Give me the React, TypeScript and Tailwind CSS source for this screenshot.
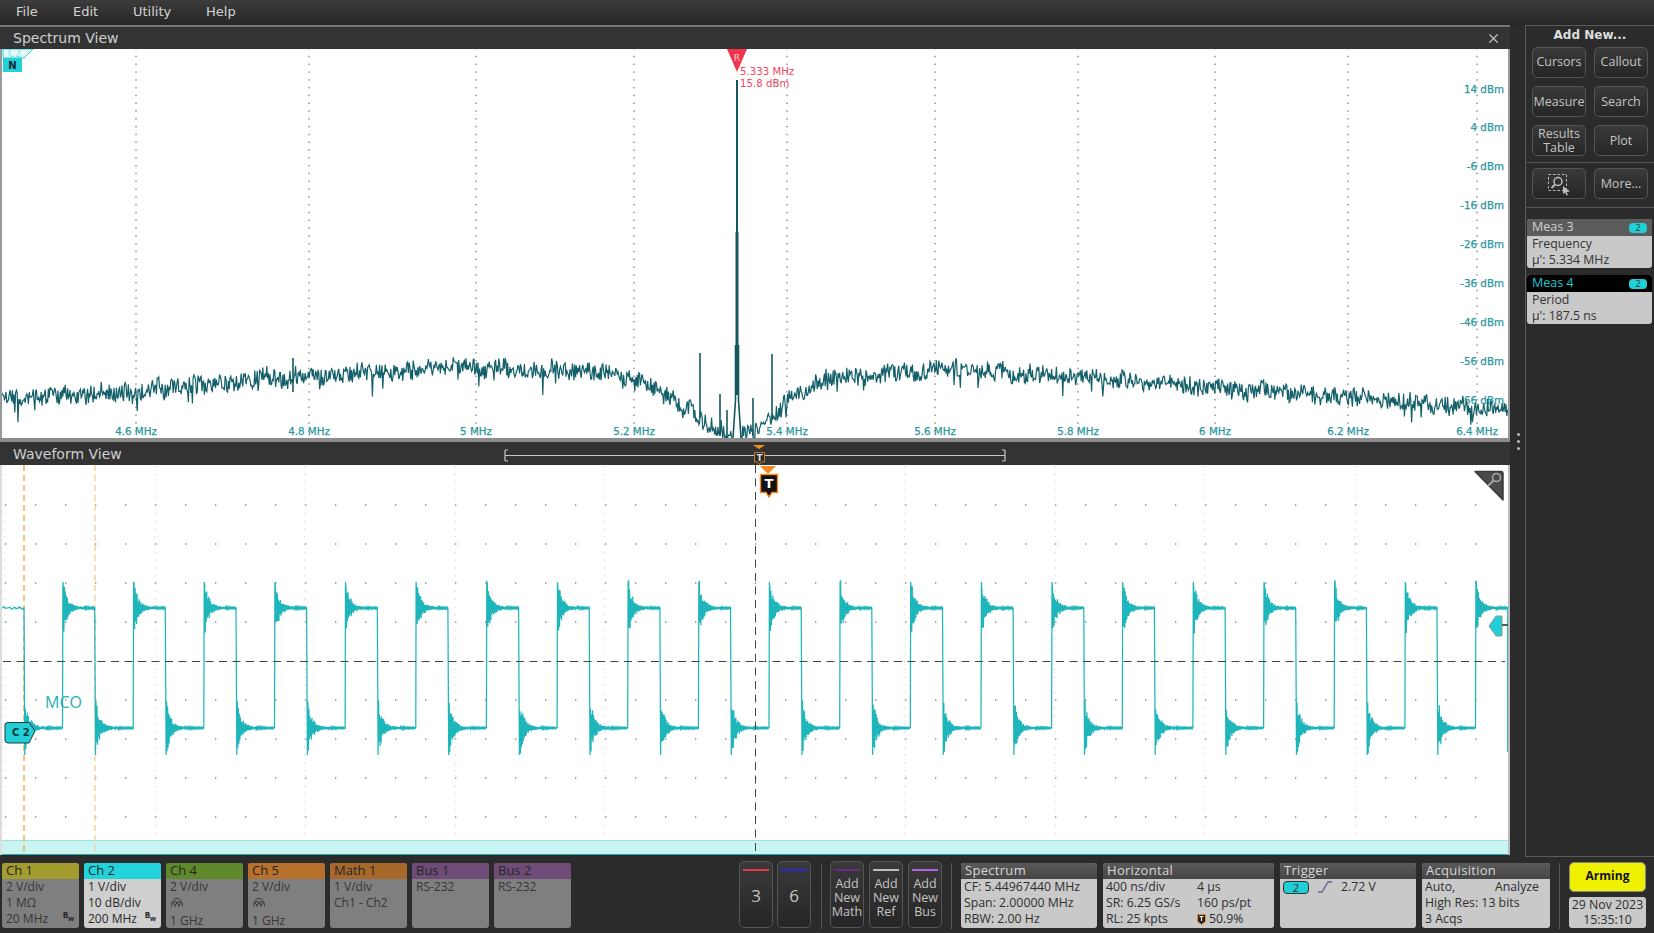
import React from 'react';
import { X } from 'lucide-react';

// seeded noise so the traces come out the same on every load
let seed = 1234567;
const rnd = () => {
  seed = (seed + 0x6d2b79f5) | 0;
  let t = Math.imul(seed ^ (seed >>> 15), 1 | seed);
  t = (t + Math.imul(t ^ (t >>> 7), 61 | t)) ^ t;
  return ((t ^ (t >>> 14)) >>> 0) / 4294967296;
};

const LEVELS: [number, number][] = [
  [0, 398], [150, 390], [290, 376], [450, 368], [600, 372], [650, 386], [690, 410], [715, 428],
  [733, 436], [741, 436], [760, 428], [790, 398], [830, 378], [950, 368], [1100, 378], [1250, 390],
  [1400, 402], [1510, 410],
];

const levelAt = (x: number) => {
  for (let i = 1; i < LEVELS.length; i++) {
    if (x <= LEVELS[i][0]) {
      const [x0, y0] = LEVELS[i - 1];
      const [x1, y1] = LEVELS[i];
      return y0 + ((y1 - y0) * (x - x0)) / (x1 - x0);
    }
  }
  return 410;
};

const buildSpectrum = () => {
  let d = '';
  let pen = false;
  let drift = 0;
  for (let x = 2; x < 1508; x += 0.8) {
    if (x > 733 && x < 741) {
      pen = false;
      continue;
    }
    drift = drift * 0.75 + (rnd() - 0.5) * 4;
    let y = levelAt(x) + drift + (rnd() - 0.5) * 17;
    if (rnd() > 0.97) y += 8 + 8 * rnd();
    if (x < 30 && rnd() > 0.9) y += 20;
    d += `${pen ? 'L' : 'M'}${x.toFixed(1)} ${Math.min(y, 438).toFixed(1)}`;
    pen = true;
  }
  return d;
};

const RISES = Array.from({ length: 21 }, (_, i) => 62.5 + i * 70.65);
const FALLS = Array.from({ length: 22 }, (_, i) => 24 + i * 70.65);

const buildWaveform = () => {
  let d = 'M2 608';
  for (let x = 3; x < 24; x += 1) d += `L${x} ${(608 + (rnd() - 0.5) * 2.5).toFixed(1)}`;
  const ring = (from: number, to: number, mid: number, tip: number) => {
    d += `L${from.toFixed(1)} ${tip}`;
    let flip = 1;
    for (let x = from + 0.5; x < to; x += 0.5) {
      const dt = x - from;
      const a = 24 * Math.exp(-dt / 3.5) + 8 * Math.exp(-dt / 8) + 0.6;
      flip = -flip;
      d += `L${x.toFixed(1)} ${(mid + flip * a * (0.5 + rnd() * 0.5)).toFixed(1)}`;
    }
    d += `L${to.toFixed(1)} ${mid}`;
  };
  RISES.forEach((r, i) => {
    const f = FALLS[i];
    d += `L${f.toFixed(1)} 608`;
    ring(f + 0.8, r, 728, 755);
    ring(r + 0.4, FALLS[i + 1], 608, 582);
  });
  d += `L${FALLS[21].toFixed(1)} 752`;
  return d;
};

const SPECTRUM_D = buildSpectrum();
const WAVE_D = buildWaveform();

const DBM = [
  ['14 dBm', 93], ['4 dBm', 131], ['-6 dBm', 170], ['-16 dBm', 209], ['-26 dBm', 248],
  ['-36 dBm', 287], ['-46 dBm', 326], ['-56 dBm', 365], ['-66 dBm', 404],
] as const;

const FREQ = [
  ['4.6 MHz', 136], ['4.8 MHz', 309], ['5 MHz', 476], ['5.2 MHz', 634], ['5.4 MHz', 787],
  ['5.6 MHz', 935], ['5.8 MHz', 1078], ['6 MHz', 1215], ['6.2 MHz', 1348], ['6.4 MHz', 1477],
] as const;

const SpectrumPlot = () => (
  <svg viewBox="2 49 1506 389" className="block w-[1506px] h-[389px] bg-white">
    {FREQ.map(([, x]) => (
      <line key={x} x1={x} x2={x} y1={48} y2={438} stroke="#555" strokeWidth={1} strokeDasharray="1.4 6.4" />
    ))}
    {DBM.map(([label, y]) => (
      <text key={label} x={1504} y={y} textAnchor="end" className="fill-[#2a979d] stroke-[#2a979d] stroke-[0.25] text-[10.3px] font-['DejaVu_Sans']">
        {label}
      </text>
    ))}
    {FREQ.map(([label, x]) => (
      <text key={label} x={x} y={435} textAnchor="middle" className="fill-[#2a979d] stroke-[#2a979d] stroke-[0.25] text-[10.3px] font-['DejaVu_Sans']">
        {label}
      </text>
    ))}
    <path d={SPECTRUM_D} fill="none" stroke="#14606a" strokeWidth={1.2} />
    {/* carrier and side spurs */}
    <g stroke="#15575f" fill="none">
      <path d="M737 80V395" strokeWidth={2} />
      <path d="M737 232V348" strokeWidth={3} />
      <path d="M735.5 345V400L733 438M738.5 345V400L741 438" strokeWidth={1.6} />
      <path d="M700 353V418M772 354V420M293 358V392M720 394V436M753 398V436M727 410V438" strokeWidth={1.6} />
    </g>
    <polygon points="3,49 33,49 24,58 3,58" fill="#e4fafa" stroke="#24d0d8" strokeWidth={1} />
    <text x={8} y={57} className="fill-[#7fdfe3] text-[10px] font-['DejaVu_Sans']">C2</text>
    <rect x={3} y={58} width={19} height={14} fill="#22d0d8" />
    <text x={12.5} y={69} textAnchor="middle" className="fill-[#123] text-[10px] font-bold font-['DejaVu_Sans']">N</text>
    <polygon points="727,49 747,49 737,72" fill="#f0354f" />
    <text x={737} y={61} textAnchor="middle" className="fill-[#ffd5da] text-[9px] font-['DejaVu_Sans']">R</text>
    <text x={740} y={75} className="fill-[#f0455c] text-[10.2px] font-['DejaVu_Sans']">5.333 MHz</text>
    <text x={740} y={87} className="fill-[#f0455c] text-[10.2px] font-['DejaVu_Sans']">15.8 dBm</text>
  </svg>
);

const WAVE_ROWS = [505, 544, 583, 622, 700, 739, 778, 817];
const WAVE_COLS = [5, 155, 305, 455, 605, 905, 1055, 1205, 1355];

const WaveformPlot = () => (
  <svg viewBox="2 465 1506 390" className="block w-[1506px] h-[390px] bg-white">
    {WAVE_ROWS.map((y) => (
      <line key={y} x1={5} x2={1505} y1={y} y2={y} stroke="#555" strokeWidth={1.2} strokeDasharray="1.4 28.6" />
    ))}
    {WAVE_COLS.map((x) => (
      <line key={x} x1={x} x2={x} y1={466} y2={840} stroke="#ccc" strokeWidth={1} strokeDasharray="1.3 6.5" />
    ))}
    <rect x={2} y={840} width={1506} height={14} fill="#c8f4f2" />
    <line x1={2} x2={1508} y1={840.5} y2={840.5} stroke="#9fe0e0" />
    <line x1={2} x2={1508} y1={854.5} y2={854.5} stroke="#2aa3aa" />
    <line x1={24} x2={24} y1={465} y2={854} stroke="#f59a2e" strokeWidth={1.2} strokeDasharray="6 4" />
    <line x1={95} x2={95} y1={465} y2={854} stroke="#f8c58c" strokeWidth={1.2} strokeDasharray="6 4" />
    <path d={WAVE_D} fill="none" stroke="#1fb6bb" strokeWidth={1.25} />
    <line x1={3} x2={1505} y1={661.5} y2={661.5} stroke="#444" strokeWidth={1} strokeDasharray="8 5.5" />
    <line x1={755.5} x2={755.5} y1={465} y2={854} stroke="#444" strokeWidth={1} strokeDasharray="8 5.5" />
    {/* trigger position marker */}
    <polygon points="760,466 776,466 768,474" fill="#f58a24" />
    <path d="M760.5 474.5H777.5V492.5H772L769 497L766 492.5H760.5Z" fill="#111" stroke="#f58a24" strokeWidth={1.4} />
    <text x={769} y={488} textAnchor="middle" className="fill-white text-[13px] font-bold font-['DejaVu_Sans']">T</text>
    {/* zoom corner */}
    <path d="M1475 471.5H1501Q1503 471.5 1503 474V500Z" fill="#4a4a4a" stroke="#3a3a3a" strokeWidth={1.5} strokeLinejoin="round" />
    <circle cx={1496.5} cy={477.5} r={4} fill="none" stroke="#a5a5a5" strokeWidth={1.6} />
    <line x1={1493.5} y1={480.5} x2={1488} y2={486} stroke="#a5a5a5" strokeWidth={2} />
    {/* ch2 markers */}
    <polygon points="1489,626 1496,616 1502,616 1502,636 1496,636" fill="#22cfd6" stroke="#8a9a9a" strokeWidth={1} />
    <line x1={1502} x2={1508} y1={625} y2={625} stroke="#333" strokeWidth={1.6} />
    <path d="M8 722.5H29L35 731L29 743H8Q5 743 5 740V725Q5 722.5 8 722.5Z" fill="#22cfd6" stroke="#1c3a40" strokeWidth={1} />
    <text x={12} y={736} className="fill-[#12343a] text-[10px] font-bold font-['DejaVu_Sans']">C 2</text>
    <text x={45} y={708} className="fill-[#1fb0b5] text-[16px] font-['Open_Sans']">MCO</text>
  </svg>
);

const WaveHeaderOverlay = () => (
  <svg viewBox="0 0 1510 23" className="absolute inset-0 w-[1510px] h-[23px]">
    <path d="M505 8V19M505 13.5H1005M1005 8V19M505 8H508M505 19H508M1005 8H1002M1005 19H1002" fill="none" stroke="#c8c8c8" strokeWidth={1.2} />
    <polygon points="753,3 765,3 759,7" fill="#f58a24" />
    <path d="M754.5 10.5H764.5V20H761L759.5 22.5L758 20H754.5Z" fill="#2a2a2a" stroke="#c47a2e" strokeWidth={1} />
    <text x={759.5} y={19} textAnchor="middle" className="fill-[#ddd] text-[9px] font-bold font-['DejaVu_Sans']">T</text>
  </svg>
);

const Bw = () => (
  <span className="absolute right-[5px] bottom-[6px] text-[8px] leading-none font-bold text-[#222]">
    B<span className="text-[7px] align-sub">w</span>
  </span>
);

const Probe = () => (
  <svg viewBox="0 0 14 11" className="w-[14px] h-[11px] mt-[2px]" fill="none" stroke="#3a3a3a" strokeWidth={1}>
    <path d="M1.5 9.5C1.5 4 4 1.5 7 1.5S12.5 4 12.5 9.5" />
    <circle cx={5} cy={6} r={1.6} />
    <circle cx={9} cy={6} r={1.6} />
    <path d="M5 7.6V10M9 7.6V10" />
  </svg>
);

type ChannelProps = {
  title: string;
  head: string;
  lines: React.ReactNode[];
  selected?: boolean;
  bw?: boolean;
};

const Channel = ({ title, head, lines, selected, bw }: ChannelProps) => (
  <div className={`relative w-[77px] h-[65px] rounded-[3px] ${selected ? 'bg-[#cfcfcf]' : 'bg-[#7f7f7f]'}`}>
    <div className={`h-[16px] px-[4px] rounded-t-[3px] text-[13px] leading-[15px] text-[#262626] ${head}`}>{title}</div>
    <div className={`px-[4px] text-[12px] leading-[16px] ${selected ? 'text-[#2a2a2a]' : 'text-[#363636]'}`}>
      {lines.map((l, i) => (
        <div key={i} className="h-[16px]">{l}</div>
      ))}
    </div>
    {bw && <Bw />}
  </div>
);

const Readout = ({ title, width, children }: { title: string; width: string; children: React.ReactNode }) => (
  <div className={`${width} h-[65px] rounded-[3px] bg-[#c9c9c9]`}>
    <div className="h-[16px] px-[4px] rounded-t-[3px] bg-linear-to-b from-[#5a5a5a] to-[#454545] text-[13px] leading-[15px] tracking-[0.3px] text-[#d8d8d8]">
      {title}
    </div>
    <div className="px-[3px] text-[12.3px] leading-[16px] text-[#2e2e2e]">{children}</div>
  </div>
);

const softKey = 'border border-[#555] rounded-[5px] bg-linear-to-b from-[#3a3a3a] to-[#262626] text-[#c4c4c4] text-center';

const RefKey = ({ n, strip }: { n: string; strip: string }) => (
  <div className={`${softKey} w-[34px] h-[67px] -mt-[2px] px-[3px] pt-[7px]`}>
    <div className={`h-[2px] ${strip}`} />
    <div className="mt-[15px] text-[17px] leading-[20px]">{n}</div>
  </div>
);

const AddKey = ({ label, strip }: { label: string; strip: string }) => (
  <div className={`${softKey} w-[34px] h-[67px] -mt-[2px] px-[3px] pt-[7px]`}>
    <div className={`h-[2px] ${strip}`} />
    <div className="mt-[6px] -mx-[3px] text-[12.5px] leading-[14px]">
      Add<br />New<br />{label}
    </div>
  </div>
);

const PanelKey = ({ children, lift }: { children: React.ReactNode; lift?: boolean }) => (
  <div className={`${softKey} h-[31px] ${lift ? 'pb-[2px]' : ''} flex items-center justify-center text-[12.5px] leading-[14px]`}>{children}</div>
);

const Badge2 = () => (
  <span className="w-[18px] h-[10px] rounded-[4px] bg-[#22cfd6] text-[9px] leading-[10px] text-center text-[#1c3a40]">2</span>
);

const Meas = ({ name, line1, line2, active }: { name: string; line1: string; line2: string; active?: boolean }) => (
  <div className="h-[49px] rounded-[3px] overflow-hidden bg-[#c9c9c9]">
    <div className={`h-[17px] pl-[5px] pr-[5px] flex items-center justify-between text-[12.5px] ${active ? 'bg-black text-[#1fc8d0]' : 'bg-[#5c5c5c] text-[#d0d0d0]'}`}>
      {name}
      <Badge2 />
    </div>
    <div className="px-[5px] text-[12.3px] leading-[16px] text-[#333]">
      <div>{line1}</div>
      <div>{line2}</div>
    </div>
  </div>
);

const VSep = () => <div className="w-px h-[66px] bg-[#555]" />;

const App: React.FC = () => {
  return (
    <div className="w-[1654px] h-[933px] flex flex-col overflow-hidden bg-[#2b2b2b] font-['Open_Sans',sans-serif]">
      {/* Menu bar */}
      <div className="h-[25px] flex items-center pl-[16px] pb-px bg-linear-to-b from-[#3c3c3c] to-[#262626] text-[13px] text-[#d4d4d4] font-['DejaVu_Sans',sans-serif]">
        <span className="w-[57px]">File</span>
        <span className="w-[60px]">Edit</span>
        <span className="w-[73px]">Utility</span>
        <span>Help</span>
      </div>

      <div className="h-[832px] flex">
        {/* Views */}
        <div className="w-[1510px] border-t-2 border-[#777]">
          <div className="h-[22px] pl-[13px] pr-[9px] flex items-center justify-between bg-[#333] text-[14px] text-[#cfcfcf] font-['DejaVu_Sans',sans-serif]">
            Spectrum View
            <X size={15} className="text-[#bdbdbd]" />
          </div>
          <div className="border-x-2 border-[#999]">
            <SpectrumPlot />
          </div>
          <div className="h-[4px] bg-[#8c8c8c]" />
          <div className="relative h-[23px] pl-[13px] pt-[2px] flex items-center bg-[#333] text-[14px] text-[#cfcfcf] font-['DejaVu_Sans',sans-serif]">
            Waveform View
            <WaveHeaderOverlay />
          </div>
          <div className="border-l-2 border-[#ddd] border-r-2 border-r-[#bbb]">
            <WaveformPlot />
          </div>
        </div>

        {/* Gutter handle */}
        <div className="w-[15px] flex flex-col items-center justify-center gap-[4px] pl-[1px]">
          <span className="w-[3px] h-[3px] rounded-full bg-[#bbb]" />
          <span className="w-[3px] h-[3px] rounded-full bg-[#bbb]" />
          <span className="w-[3px] h-[3px] rounded-full bg-[#bbb]" />
        </div>

        {/* Results panel */}
        <div className="w-[129px] border-l border-t border-b border-[#5c5c5c]">
          <div className="h-[21px] pb-[4px] flex items-center justify-center text-[12px] font-bold text-[#dedede] font-['DejaVu_Sans',sans-serif]">
            Add New...
          </div>
          <div className="ml-[6px] grid grid-cols-[54px_54px] gap-x-2 gap-y-2">
            <PanelKey lift>Cursors</PanelKey>
            <PanelKey lift>Callout</PanelKey>
            <PanelKey>Measure</PanelKey>
            <PanelKey>Search</PanelKey>
            <PanelKey>Results<br />Table</PanelKey>
            <PanelKey>Plot</PanelKey>
          </div>
          <div className="mt-[6px] h-px bg-[#555]" />
          <div className="mt-[5px] ml-[6px] grid grid-cols-[54px_54px] gap-x-2">
            <PanelKey>
              <svg viewBox="0 0 26 24" className="w-[26px] h-[24px]" fill="none" stroke="#bdbdbd">
                <rect x={2.5} y={2.5} width={18} height={16} strokeDasharray="2.5 2" />
                <circle cx={12} cy={9.5} r={4} strokeWidth={1.5} />
                <path d="M9 12.5L5.5 16" strokeWidth={2} />
                <path d="M17 14L24 19.5L20.5 20L22 23L20.5 23.5L19 20.5L17 22Z" fill="#bdbdbd" stroke="none" />
              </svg>
            </PanelKey>
            <PanelKey>More...</PanelKey>
          </div>
          <div className="mt-[8px] h-px bg-[#555]" />
          <div className="mt-[11px] ml-[1px] mr-[2px] flex flex-col gap-[7px]">
            <Meas name="Meas 3" line1="Frequency" line2="µ': 5.334 MHz" />
            <Meas name="Meas 4" line1="Period" line2="µ': 187.5 ns" active />
          </div>
        </div>
      </div>

      {/* Bottom bar */}
      <div className="h-[76px] flex items-start pl-[2px] pt-[6px]">
        <div className="flex gap-[5px]">
          <Channel title="Ch 1" head="bg-[#a39c2e]" lines={['2 V/div', '1 MΩ', '20 MHz']} bw />
          <Channel title="Ch 2" head="bg-[#22d3db]" lines={['1 V/div', '10 dB/div', '200 MHz']} selected bw />
          <Channel title="Ch 4" head="bg-[#5f8a2c]" lines={['2 V/div', <Probe />, '1 GHz']} />
          <Channel title="Ch 5" head="bg-[#b8702d]" lines={['2 V/div', <Probe />, '1 GHz']} />
          <Channel title="Math 1" head="bg-[#a8682a]" lines={['1 V/div', 'Ch1 - Ch2']} />
          <Channel title="Bus 1" head="bg-[#6e4c77]" lines={['RS-232']} />
          <Channel title="Bus 2" head="bg-[#6e4c77]" lines={['RS-232']} />
        </div>

        <div className="ml-[168px] flex gap-[4px]">
          <RefKey n="3" strip="bg-[#e8364f]" />
          <RefKey n="6" strip="bg-[#2a2ad0]" />
        </div>
        <div className="ml-[10px] mr-[8px]"><VSep /></div>
        <div className="flex gap-[5px]">
          <AddKey label="Math" strip="bg-[#6a2a8a]" />
          <AddKey label="Ref" strip="bg-[#bdbdbd]" />
          <AddKey label="Bus" strip="bg-[#b060e0]" />
        </div>
        <div className="ml-[9px] mr-[9px]"><VSep /></div>

        <div className="flex gap-[6px]">
          <Readout title="Spectrum" width="w-[136px]">
            <div>CF: 5.44967440 MHz</div>
            <div>Span: 2.00000 MHz</div>
            <div>RBW: 2.00 Hz</div>
          </Readout>
          <Readout title="Horizontal" width="w-[171px]">
            <div className="grid grid-cols-[91px_1fr]">
              <span>400 ns/div</span><span>4 µs</span>
              <span>SR: 6.25 GS/s</span><span>160 ps/pt</span>
              <span>RL: 25 kpts</span>
              <span className="flex items-center gap-[3px]">
                <svg viewBox="0 0 9 11" className="w-[9px] h-[11px]">
                  <path d="M0.5 0.5H8.5V7.5L4.5 10.5L0.5 7.5Z" fill="#222" stroke="#f58a24" />
                  <path d="M2.5 2.5H6.5M4.5 2.5V7" stroke="#fff" strokeWidth={1.2} />
                </svg>
                50.9%
              </span>
            </div>
          </Readout>
          <Readout title="Trigger" width="w-[136px]">
            <div className="flex items-center">
              <span className="w-[26px] h-[13px] rounded-[4px] border border-[#333] bg-[#22cfd6] text-[11px] leading-[11px] text-center text-[#1c3a40]">2</span>
              <svg viewBox="0 0 14 12" className="ml-[9px] w-[14px] h-[12px]" fill="none" stroke="#6a5a9a" strokeWidth={1.3}>
                <path d="M0 11H4L10 1H14" />
              </svg>
              <span className="ml-[9px]">2.72 V</span>
            </div>
          </Readout>
          <Readout title="Acquisition" width="w-[128px]">
            <div className="flex justify-between pr-[8px]"><span>Auto,</span><span>Analyze</span></div>
            <div>High Res: 13 bits</div>
            <div>3 Acqs</div>
          </Readout>
        </div>

        <div className="ml-[9px] mr-[9px]"><VSep /></div>
        <div className="-mt-px w-[77px] flex flex-col gap-[5px]">
          <div className="h-[30px] pb-[2px] rounded-[5px] border border-[#888] bg-[#eef000] flex items-center justify-center text-[12px] font-bold text-[#111]">
            Arming
          </div>
          <div className="h-[31px] rounded-[3px] bg-[#c9c9c9] text-center text-[12.3px] leading-[15px] text-[#2e2e2e]">
            29 Nov 2023<br />15:35:10
          </div>
        </div>
      </div>
    </div>
  );
};

export default App;
